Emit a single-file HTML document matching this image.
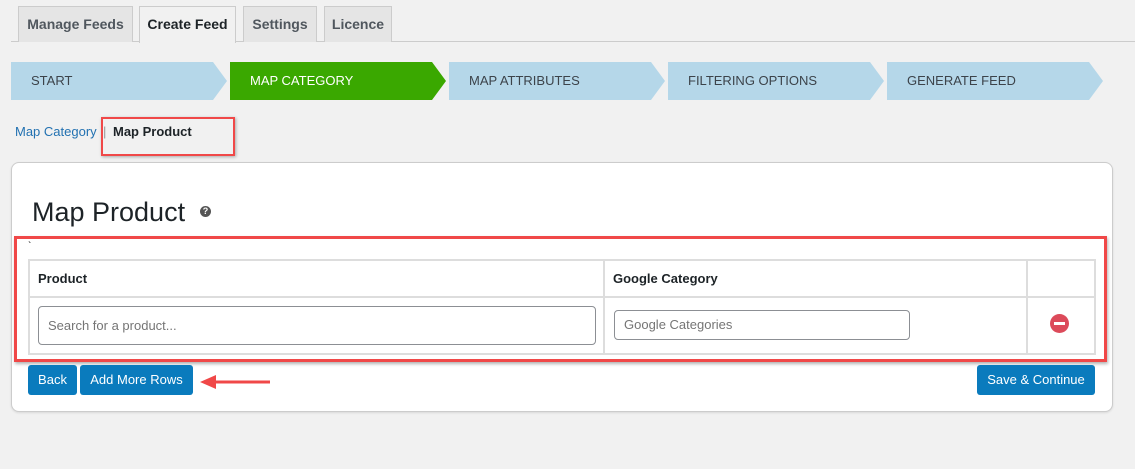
<!DOCTYPE html><html><head><style>
body{margin:0;width:1135px;height:469px;background:#f1f1f1;font-family:"Liberation Sans",sans-serif;position:relative;overflow:hidden}
.a{position:absolute;box-sizing:border-box}
.tab{top:6px;height:36px;border:1px solid #ccc;border-bottom:none;background:#e5e5e5;color:#50575e;font-size:14px;font-weight:600;line-height:34px;text-align:center}
.st{top:62px;height:38px;color:#3c434a;font-size:13px;line-height:38px;padding-left:20px;clip-path:polygon(0 0,calc(100% - 14px) 0,100% 50%,calc(100% - 14px) 100%,0 100%)}
.btn{top:365px;height:30px;background:#0a7bbd;color:#fff;font-size:13px;line-height:30px;text-align:center;border-radius:3px}
</style></head><body>
<div class="a" style="left:11px;right:0;top:41px;height:1px;background:#ccc"></div>
<div class="a tab" style="left:18px;width:115px">Manage Feeds</div>
<div class="a tab" style="left:139px;width:97px;background:#f1f1f1;color:#1d2327;height:37px">Create Feed</div>
<div class="a tab" style="left:243px;width:74px">Settings</div>
<div class="a tab" style="left:324px;width:68px">Licence</div>
<div class="a st" style="left:11px;width:216px;background:#b5d7e9">START</div>
<div class="a st" style="left:230px;width:216px;background:#3aa800;color:#fff">MAP CATEGORY</div>
<div class="a st" style="left:449px;width:216px;background:#b5d7e9">MAP ATTRIBUTES</div>
<div class="a st" style="left:668px;width:216px;background:#b5d7e9">FILTERING OPTIONS</div>
<div class="a st" style="left:887px;width:216px;background:#b5d7e9">GENERATE FEED</div>
<div class="a" style="left:15px;top:124px;font-size:13px;color:#2271b1">Map Category</div>
<div class="a" style="left:103px;top:124px;font-size:13px;color:#999">|</div>
<div class="a" style="left:113px;top:124px;font-size:13px;color:#1d2327;font-weight:600">Map Product</div>
<div class="a" style="left:101px;top:117px;width:134px;height:39px;border:2px solid #f04848;box-shadow:1px 1px 3px rgba(0,0,0,.3)"></div>
<div class="a" style="left:11px;top:162px;width:1102px;height:250px;background:#fff;border:1px solid #ccc;border-radius:8px;box-shadow:0 1px 2px rgba(0,0,0,.1)"></div>
<div class="a" style="left:32px;top:197px;font-size:27px;color:#1d2327">Map Product</div>
<div class="a" style="left:200px;top:206px;width:11px;height:11px;border-radius:50%;background:#555;color:#fff;font-size:9px;line-height:11px;text-align:center;font-weight:bold">?</div>
<div class="a" style="left:28px;top:241px;font-size:10px">`</div>
<div class="a" style="left:28px;top:259px;width:1068px;height:96px;border:2px solid #ddd"></div>
<div class="a" style="left:28px;top:296px;width:1068px;height:2px;background:#ddd"></div>
<div class="a" style="left:603px;top:259px;width:2px;height:96px;background:#ddd"></div>
<div class="a" style="left:1026px;top:259px;width:2px;height:96px;background:#ddd"></div>
<div class="a" style="left:38px;top:271px;font-size:13px;font-weight:bold;color:#1d2327">Product</div>
<div class="a" style="left:613px;top:271px;font-size:13px;font-weight:bold;color:#1d2327">Google Category</div>
<div class="a" style="left:38px;top:306px;width:558px;height:39px;border:1px solid #8c8f94;border-radius:4px;font-size:13px;color:#757575;line-height:37px;padding-left:9px">Search for a product...</div>
<div class="a" style="left:614px;top:310px;width:296px;height:30px;border:1px solid #8c8f94;border-radius:4px;font-size:13px;color:#757575;line-height:28px;padding-left:9px">Google Categories</div>
<div class="a" style="left:1050px;top:314px;width:19px;height:19px;border-radius:50%;background:#dc4a5a"><div class="a" style="left:4px;top:8px;width:11px;height:3px;background:#fff"></div></div>
<div class="a" style="left:14px;top:236px;width:1093px;height:126px;border:3px solid #f04848;box-shadow:1px 2px 3px rgba(0,0,0,.3)"></div>
<div class="a btn" style="left:28px;width:49px">Back</div>
<div class="a btn" style="left:80px;width:113px">Add More Rows</div>
<div class="a btn" style="left:977px;width:118px">Save &amp; Continue</div>
<svg class="a" style="left:198px;top:374px" width="78" height="18"><path d="M14 8 L72 8" stroke="#f04848" stroke-width="3"/><path d="M2 8 L18 1 L18 15 Z" fill="#f04848"/></svg>
</body></html>
